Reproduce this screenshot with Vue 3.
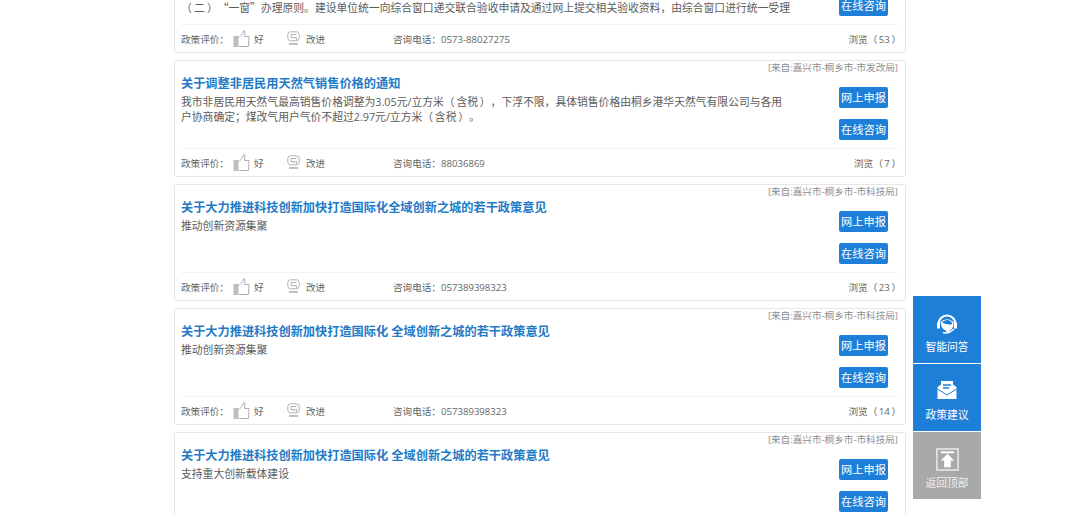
<template>
  <div class="page">
    <div class="list">
      <div v-for="item in policies" :key="item.phone + item.views" class="card">
        <div class="source">{{ item.source }}</div>
        <div class="content">
          <div class="main">
            <div class="title">{{ item.title }}</div>
            <div class="body" :class="{ clipped: item.clipped }">
              <p v-for="line in item.lines" :key="line">{{ line }}</p>
            </div>
          </div>
          <div class="actions">
            <a class="btn">网上申报</a>
            <a class="btn">在线咨询</a>
          </div>
        </div>
        <div class="foot">
          <span class="label">政策评价：</span>
          <svg class="thumb" width="17" height="18" viewBox="0 0 17 18">
            <rect x="0.5" y="6" width="5" height="11" fill="#bdbdbd" />
            <path d="M6 7.5 L9.5 4 L10.5 0.8 L12 1.5 L11.6 6.5 L16 6.5 L15.5 16.5 L6 16.5" fill="#fff" stroke="#b0b0b0" stroke-width="1" />
          </svg>
          <span class="good">好</span>
          <svg class="improve" width="13" height="15" viewBox="0 0 13 15">
            <path d="M3.5 0.8 H9.5 Q12.2 0.8 12.2 3.5 V7 Q12.2 9.8 9.5 9.8 H3.5 Q0.8 9.8 0.8 7 V3.5 Q0.8 0.8 3.5 0.8 Z" fill="none" stroke="#b0b0b0" />
            <path d="M9.5 3.5 H4 V6.8 H9.5 V9.5" fill="none" stroke="#b0b0b0" />
            <path d="M2 13 H11" stroke="#c0c0c0" stroke-width="2" />
          </svg>
          <span class="better">改进</span>
          <span class="phone">咨询电话：{{ item.phone }}</span>
          <span class="views">浏览（&#8201;{{ item.views }}&#8201;）</span>
        </div>
      </div>
    </div>

    <div class="side">
      <div class="side-item">
        <span class="icon">
          <svg width="24" height="25" viewBox="0 0 24 25">
            <path d="M3.5 12 A8.5 8.5 0 0 1 20.5 12" fill="none" stroke="#fff" stroke-width="2.2" />
            <path d="M2 10.5 H5 V16.5 H2 Z M19 10.5 H22 V16.5 H19 Z" fill="#fff" />
            <path d="M5.5 10 Q12 4.5 18.5 10 Q19 16 15 18.5 L11.5 22 V19 Q6 17 5.5 10 Z" fill="#fff" />
            <path d="M7 10.5 Q12 13.5 17.5 12 Q16 8 12 8 Q9 8 7 10.5 Z" fill="#1e7fd8" />
            <path d="M8 20.5 Q13 22.5 19 17" fill="none" stroke="#fff" stroke-width="1.5" />
          </svg>
        </span>
        <span class="name">智能问答</span>
      </div>
      <div class="side-item">
        <span class="icon">
          <svg width="20" height="20" viewBox="0 0 20 20">
            <path d="M0.5 7 L4 4.5 V1 H16 V4.5 L19.5 7 V19 H0.5 Z" fill="#fff" />
            <path d="M0.5 9 L10 15 L19.5 9" fill="none" stroke="#1e7fd8" stroke-width="1" />
            <path d="M6 5 H14 M6 8 H12" stroke="#1e7fd8" stroke-width="1.4" />
          </svg>
        </span>
        <span class="name">政策建议</span>
      </div>
      <div class="side-item top">
        <span class="icon">
          <svg width="23" height="23" viewBox="0 0 24 24">
            <rect x="1" y="1" width="22" height="22" fill="none" stroke="#e9e9e9" stroke-width="1.6" />
            <path d="M5 4.5 H19" stroke="#fff" stroke-width="2" />
            <path d="M12 6 L19 13 H15.5 V20 H8.5 V13 H5 Z" fill="#fff" />
          </svg>
        </span>
        <span class="name">返回顶部</span>
      </div>
    </div>
  </div>
</template>

<script setup>
const TOPIC = '关于大力推进科技创新加快打造国际化全域创新之城的若干政策意见'
const TOPIC_SPACED = '关于大力推进科技创新加快打造国际化 全域创新之城的若干政策意见'
const SOURCE_TECH = '[来自:嘉兴市-桐乡市-市科技局]'

const policies = [
  {
    source: '',
    title: '',
    clipped: true,
    lines: ['（\u2009二\u2009）“一窗”办理原则。建设单位统一向综合窗口递交联合验收申请及通过网上提交相关验收资料，由综合窗口进行统一受理'],
    phone: '0573-88027275',
    views: 53
  },
  {
    source: '[来自:嘉兴市-桐乡市-市发改局]',
    title: '关于调整非居民用天然气销售价格的通知',
    lines: [
      '我市非居民用天然气最高销售价格调整为3.05元/立方米（\u2009含税\u2009），下浮不限，具体销售价格由桐乡港华天然气有限公司与各用',
      '户协商确定；煤改气用户气价不超过2.97元/立方米（\u2009含税\u2009）。'
    ],
    phone: '88036869',
    views: 7
  },
  { source: SOURCE_TECH, title: TOPIC, lines: ['推动创新资源集聚'], phone: '057389398323', views: 23 },
  { source: SOURCE_TECH, title: TOPIC_SPACED, lines: ['推动创新资源集聚'], phone: '057389398323', views: 14 },
  { source: SOURCE_TECH, title: TOPIC_SPACED, lines: ['支持重大创新载体建设'], phone: '057389398323', views: 9 }
]
</script>

<style>
html, body {
  margin: 0;
  background: #fff;
  overflow: hidden;
}
</style>

<style scoped>
.page {
  position: relative;
  height: 514px;
  overflow: hidden;
  font-family: "Open Sans", "Noto Sans CJK SC", sans-serif;
  text-spacing-trim: space-all;
}

.list {
  width: 732px;
  margin: -64px 0 0 174px;
}

.card {
  height: 117px;
  margin-bottom: 7px;
  box-sizing: border-box;
  border: 1px solid #e6e6e6;
  border-radius: 2px;
  padding: 0 7px 0 6px;
  background: #fff;
}

.source {
  height: 14px;
  line-height: 14px;
  text-align: right;
  font-size: 9.6px;
  color: #8f8f8f;
}

.content {
  display: flex;
  height: 73px;
  justify-content: space-between;
}

.main {
  width: 610px;
}

.title {
  height: 16px;
  padding-top: 1px;
  line-height: 16px;
  font-size: 12.2px;
  font-weight: 700;
  color: #1f7bc6;
}

.body {
  margin-top: 2px;
  font-size: 10.8px;
  line-height: 15px;
  color: #5c5c5c;
}

.body.clipped {
  padding-top: 30px;
  font-family: "Noto Sans CJK SC", sans-serif;
}

.body p {
  margin: 0;
  white-space: nowrap;
}

.actions {
  display: flex;
  flex-direction: column;
  gap: 11px;
  margin: 12px 10px 0 0;
}

.btn {
  width: 49px;
  height: 21px;
  line-height: 22px;
  border-radius: 2px;
  background: #1e7fd8;
  color: #fff;
  font-size: 11.2px;
  text-align: center;
}

.foot {
  display: flex;
  align-items: center;
  height: 27px;
  padding-bottom: 1px;
  border-top: 1px solid #f3f3f3;
  font-size: 9.6px;
  color: #666;
}

.label {
  width: 52px;
}

.good {
  margin-left: 4px;
  width: 33px;
}

.better {
  margin-left: 6px;
  width: 87px;
}

.phone {
  flex: 1;
}

.views {
  margin-right: -3px;
}

.side {
  position: absolute;
  left: 913px;
  top: 296px;
  width: 68px;
}

.side-item {
  display: flex;
  flex-direction: column;
  align-items: center;
  height: 67px;
  margin-bottom: 1px;
  box-sizing: border-box;
  padding-top: 16px;
  background: #1e7fd8;
  color: #fff;
  font-size: 10.8px;
}

.icon {
  display: flex;
  height: 25px;
}

.name {
  margin-top: 2px;
  line-height: 15px;
}

.side-item.top {
  margin-bottom: 0;
  background: #a9a9a9;
  color: #eee;
}
</style>
